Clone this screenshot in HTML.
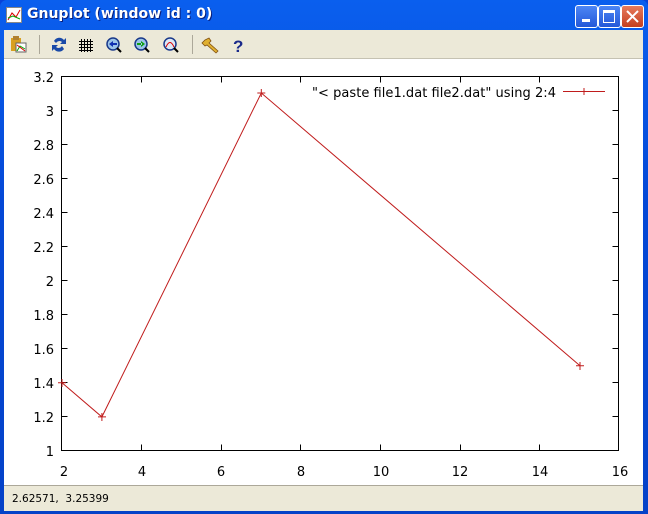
<!DOCTYPE html>
<html><head><style>
body{margin:0;width:648px;height:514px;overflow:hidden;background:#0842d8;font-family:"DejaVu Sans","Liberation Sans",sans-serif;}
#win{position:absolute;left:0;top:0;width:648px;height:514px;background:linear-gradient(#0a5fee,#0548d6 40%,#0542c8);border-radius:7px 7px 0 0;}
#title{position:absolute;left:27px;top:6px;color:#fff;font:bold 14px "DejaVu Sans",sans-serif;text-shadow:1px 1px #0a1e7a;}
#tb{position:absolute;left:4px;top:30px;width:639px;height:28px;background:#ece9d8;border-bottom:1px solid #c5c2b2;}
#plot{position:absolute;left:4px;top:59px;width:639px;height:426px;background:#fff;}
#status{position:absolute;left:4px;top:485px;width:639px;height:25px;background:#ece9d8;border-top:1px solid #aca899;}
#status span{position:absolute;left:8px;top:7px;font-size:10.5px;color:#000;}
.btn{position:absolute;top:5px;width:21px;height:21px;border:1px solid #fff;border-radius:3px;}
</style></head><body>
<div id="win">
<svg style="position:absolute;left:6px;top:7px" width="16" height="16"><rect x="0.5" y="0.5" width="15" height="15" fill="#fff" stroke="#888"/><path d="M2 13 L6 6 L10 10 L14 3" stroke="#d00" fill="none"/><path d="M2 11 L7 9 L14 12" stroke="#0a0" fill="none"/></svg>
<div id="title">Gnuplot (window id : 0)</div>
<div class="btn" style="left:575px;background:linear-gradient(#4d86f5,#2458d8)"><div style="position:absolute;left:6px;top:13px;width:8px;height:3px;background:#fff"></div></div>
<div class="btn" style="left:598px;background:linear-gradient(#4d86f5,#2458d8)"><div style="position:absolute;left:4px;top:4px;width:10px;height:9px;border:1px solid #fff;border-top:3px solid #fff"></div></div>
<div class="btn" style="left:621px;background:linear-gradient(#e77a5c,#c4401f)"><svg width="21" height="21" style="position:absolute;left:0;top:0"><path d="M5 5L16 16M16 5L5 16" stroke="#fff" stroke-width="2"/></svg></div>
<div id="tb">
<svg width="639" height="28">
<rect x="7" y="8" width="10" height="13" fill="#d8a020"/><rect x="9" y="6" width="6" height="4" fill="#b08030"/><rect x="12" y="13" width="10" height="9" fill="#fff" stroke="#666"/><path d="M13 21 L16 16 L21 19" stroke="#0a0" fill="none"/><path d="M13 15 L21 21" stroke="#d00" fill="none"/>
<line x1="35.5" y1="5" x2="35.5" y2="24" stroke="#aca899"/>
<path d="M50 11 A6 6 0 0 1 60 10 L62 8 L62 14 L56 14 L58 12 A4 4 0 0 0 52 13Z M60 19 A6 6 0 0 1 50 19 L48 21 L48 15 L54 15 L52 17 A4 4 0 0 0 58 16Z" fill="#1a4aa8"/>
<g stroke="#000" shape-rendering="crispEdges"><line x1="77.5" y1="9" x2="77.5" y2="22"/><line x1="80.5" y1="9" x2="80.5" y2="22"/><line x1="83.5" y1="9" x2="83.5" y2="22"/><line x1="86.5" y1="9" x2="86.5" y2="22"/><line x1="75" y1="11.5" x2="89" y2="11.5"/><line x1="75" y1="14.5" x2="89" y2="14.5"/><line x1="75" y1="17.5" x2="89" y2="17.5"/><line x1="75" y1="20.5" x2="89" y2="20.5"/></g>
<g><circle cx="109" cy="14" r="6" fill="#9cc4e8" stroke="#1a3a8a" stroke-width="1.5"/><path d="M105 14 L109 11 L109 17Z M108 13h5v2h-5z" fill="#1030b0"/><line x1="113" y1="18" x2="117" y2="22" stroke="#000" stroke-width="2"/></g>
<g><circle cx="137" cy="14" r="6" fill="#9cc4e8" stroke="#1a3a8a" stroke-width="1.5"/><path d="M141 14 L137 11 L137 17Z M133 13h5v2h-5z" fill="#10a010"/><line x1="141" y1="18" x2="145" y2="22" stroke="#000" stroke-width="2"/></g>
<g><circle cx="166" cy="14" r="6" fill="#dde8f5" stroke="#1a3a8a" stroke-width="1.5"/><path d="M162 17 Q166 8 170 17" stroke="#d00" fill="none"/><line x1="170" y1="18" x2="174" y2="22" stroke="#000" stroke-width="2"/></g>
<line x1="188.5" y1="5" x2="188.5" y2="24" stroke="#aca899"/>
<path d="M201 10 L205 8 L207 11 L205 13 L214 21 L212 23 L203 15 L201 16 L198 13Z" fill="#e0b030" stroke="#805010" stroke-width="0.8"/>
<text x="229" y="22" font-family="Liberation Sans" font-weight="bold" font-size="17" fill="#1a2a8a">?</text>
</svg>
</div>
<div id="plot">
<svg width="639" height="426" style="position:absolute;left:-4px;top:-59px;overflow:visible" font-family="DejaVu Sans" font-size="13">
<g stroke="#000" stroke-width="1" fill="none" shape-rendering="crispEdges">
<rect x="61.5" y="76.5" width="557" height="374"/>
<path d="M61.5 416.5h6M61.5 382.5h6M61.5 348.5h6M61.5 314.5h6M61.5 280.5h6M61.5 246.5h6M61.5 212.5h6M61.5 178.5h6M61.5 144.5h6M61.5 110.5h6
M618.5 416.5h-6M618.5 382.5h-6M618.5 348.5h-6M618.5 314.5h-6M618.5 280.5h-6M618.5 246.5h-6M618.5 212.5h-6M618.5 178.5h-6M618.5 144.5h-6M618.5 110.5h-6
M141.5 450.5v-6M221.5 450.5v-6M300.5 450.5v-6M380.5 450.5v-6M460.5 450.5v-6M539.5 450.5v-6
M141.5 76.5v6M221.5 76.5v6M300.5 76.5v6M380.5 76.5v6M460.5 76.5v6M539.5 76.5v6"/>
</g>
<g text-anchor="end" fill="#000">
<text x="54" y="456">1</text><text x="54" y="422">1.2</text><text x="54" y="388">1.4</text><text x="54" y="354">1.6</text><text x="54" y="320">1.8</text><text x="54" y="286">2</text><text x="54" y="252">2.2</text><text x="54" y="218">2.4</text><text x="54" y="184">2.6</text><text x="54" y="150">2.8</text><text x="54" y="116">3</text><text x="54" y="82">3.2</text>
</g>
<g text-anchor="middle" fill="#000">
<text x="64" y="476">2</text><text x="142" y="476">4</text><text x="221" y="476">6</text><text x="301" y="476">8</text><text x="381" y="476">10</text><text x="460" y="476">12</text><text x="540" y="476">14</text><text x="620" y="476">16</text>
</g>
<text x="556" y="97" text-anchor="end" fill="#000" textLength="244">"&lt; paste file1.dat file2.dat" using 2:4</text>
<g stroke="#c01c1c" fill="none">
<path d="M563 91.5h42M584 88v7"/>
<polyline points="62,382.8 101.9,416.9 261.3,93 580,365.8"/>
<path d="M58 382.8h8M62 379v8M98 416.9h8M101.9 413v8M257.3 93h8M261.3 89v8M576 365.8h8M580 362v8"/>
</g>
</svg>
</div>
<div id="status"><span>2.62571,&nbsp; 3.25399</span></div>
</div>
</body></html>
